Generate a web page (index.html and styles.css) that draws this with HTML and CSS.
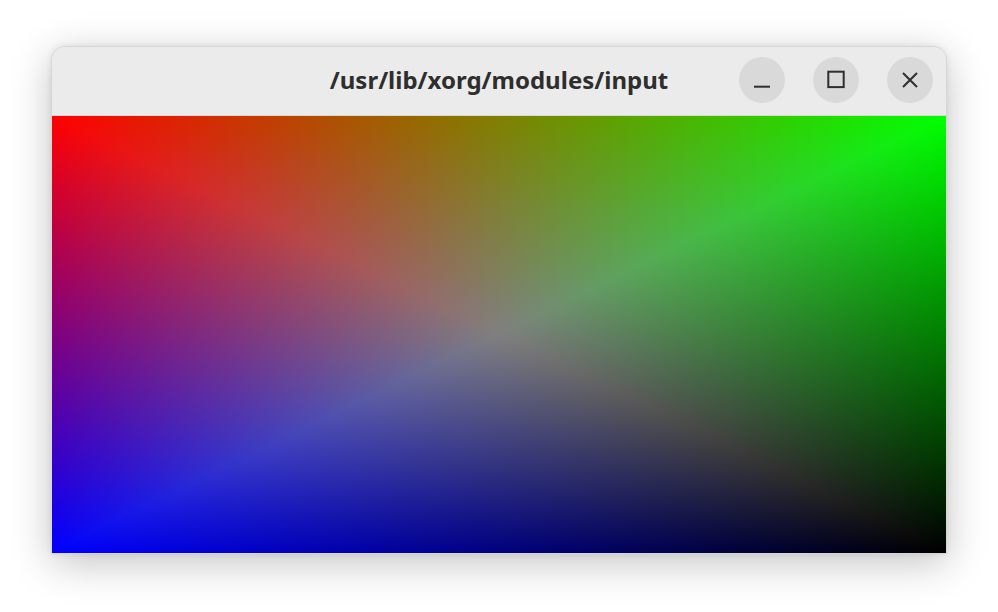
FILE: index.html
```html
<!DOCTYPE html>
<html>
<head>
<meta charset="utf-8">
<link rel="stylesheet" href="styles.css">
</head>
<body>
<div class="window">
  <div class="titlebar">
    <div class="spacer"></div>
    <div class="title">/usr/lib/xorg/modules/input</div>
    <div class="controls">
      <div class="btn">
        <svg width="20" height="20" viewBox="0 0 20 20"><rect x="2" y="15.7" width="16" height="2" fill="#2e2e2e"/></svg>
      </div>
      <div class="btn">
        <svg width="20" height="20" viewBox="0 0 20 20"><rect x="2.3" y="1.7" width="15.4" height="15.4" fill="none" stroke="#2e2e2e" stroke-width="2"/></svg>
      </div>
      <div class="btn">
        <svg width="20" height="20" viewBox="0 0 20 20"><path d="M3 3 L17 17 M17 3 L3 17" stroke="#2e2e2e" stroke-width="2" fill="none"/></svg>
      </div>
    </div>
  </div>
  <div class="canvas">
    <div class="ch r"></div>
    <div class="ch g"></div>
    <div class="ch b"></div>
  </div>
</div>
</body>
</html>
```
FILE: styles.css
```css
html, body {
  margin: 0;
  padding: 0;
  background: #ffffff;
}
body {
  box-sizing: border-box;
  min-height: 612px;
  padding: 46px 0 58px 51px;
  font-family: "Noto Sans", "Open Sans", sans-serif;
}
.window {
  width: 894px;
  border: 1px solid #d6d6d6;
  border-radius: 14px 14px 0 0;
  background: #ebebeb;
  box-shadow: 0 9px 40px rgba(0, 0, 0, 0.24), 0 0 6px rgba(0, 0, 0, 0.08);
  overflow: hidden;
}
.titlebar {
  height: 68px;
  border-bottom: 1px solid #d8d8d8;
  display: grid;
  grid-template-columns: 1fr auto 1fr;
  align-items: center;
  background: #ebebeb;
}
.title {
  font-weight: 700;
  font-size: 24px;
  color: #2e2e2e;
  text-align: center;
  padding-bottom: 3px;
}
.controls {
  justify-self: end;
  display: flex;
  gap: 28px;
  padding-right: 13px;
  padding-bottom: 2px;
}
.btn {
  width: 46px;
  height: 46px;
  border-radius: 50%;
  background: #d9d9d9;
  display: flex;
  align-items: center;
  justify-content: center;
}
.btn svg {
  display: block;
}
.canvas {
  height: 437px;
  display: grid;
  background: #000;
  isolation: isolate;
}
.ch {
  grid-area: 1 / 1;
  background-blend-mode: darken;
  mix-blend-mode: lighten;
}
.r {
  background-image: linear-gradient(to right, #ff0000, #000000), linear-gradient(to bottom, #ff0000, #000000);
}
.g {
  background-image: linear-gradient(to left, #00ff00, #000000), linear-gradient(to bottom, #00ff00, #000000);
}
.b {
  background-image: linear-gradient(to right, #0000ff, #000000), linear-gradient(to top, #0000ff, #000000);
}
```
